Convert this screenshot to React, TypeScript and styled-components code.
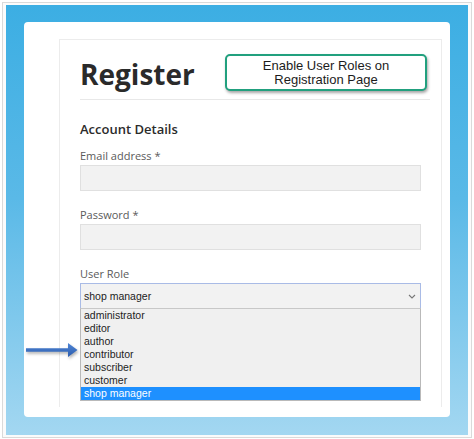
import React from 'react'
import styled, {createGlobalStyle} from 'styled-components'

const roles = ['administrator', 'editor', 'author', 'contributor', 'subscriber', 'customer', 'shop manager']

const App = () => {
  const selected = 'shop manager'
  return (
    <Page>
      <GlobalStyle />
      <Outer>
        <Blue>
          <Card>
            <FormBox>
              <Title>Register</Title>
              <Section>Account Details</Section>
              <Field>
                <Label>Email address *</Label>
                <Input />
              </Field>
              <Field>
                <Label>Password *</Label>
                <Input />
              </Field>
              <Field>
                <Label>User Role</Label>
                <Select>
                  <span>{selected}</span>
                  <svg width="8" height="5" viewBox="0 0 8 5" fill="none">
                    <path d="M1 1l3 3 3-3" stroke="#777" strokeWidth="1.1" />
                  </svg>
                </Select>
                <Options>
                  {roles.map((r) => (
                    <Option key={r} active={r === selected}>{r}</Option>
                  ))}
                </Options>
              </Field>
            </FormBox>

            <Callout>
              Enable User Roles on
              <br />
              Registration Page
            </Callout>

            <Arrow width="54" height="18" viewBox="0 0 54 18">
              <defs>
                <linearGradient id="ag" x1="0" y1="0" x2="0" y2="1">
                  <stop offset="0" stopColor="#4f86d6" />
                  <stop offset="1" stopColor="#2c5cad" />
                </linearGradient>
              </defs>
              <path d="M1 7.2h42V2l9.5 7-9.5 7v-5.2H1z" fill="url(#ag)" />
            </Arrow>
          </Card>
        </Blue>
      </Outer>
    </Page>
  )
}

export default App

const GlobalStyle = createGlobalStyle`
  body {
    margin: 0;
    background: #fff;
    font-family: "Open Sans", "Liberation Sans", sans-serif;
  }
`

const Page = styled.div`
  width: 474px;
  height: 439px;
  padding: 2px 2px 0 2px;
  box-sizing: border-box;
`

const Outer = styled.div`
  width: 470px;
  height: 436px;
  border: 1px solid #dadada;
  padding: 2px 3px;
  box-sizing: border-box;
  background: #fbfbfb;
`

const Blue = styled.div`
  width: 462px;
  height: 430px;
  padding: 17px 18px 18px 18px;
  box-sizing: border-box;
  background: linear-gradient(180deg, #3caee3 0%, #5ab9e7 45%, #a3d7f1 100%);
`

const Card = styled.div`
  position: relative;
  width: 426px;
  height: 395px;
  background: #fff;
  border-radius: 4px;
  padding: 17px 8px 10px 35px;
  box-sizing: border-box;
`

const FormBox = styled.div`
  height: 100%;
  border: 1px solid #ececec;
  border-bottom: none;
  padding: 17px 20px 0 20px;
  box-sizing: border-box;
`

const Title = styled.h1`
  margin: 0 -9px 0 0;
  padding: 0 0 8px 0;
  font-size: 28px;
  line-height: 34px;
  font-weight: 700;
  color: #2a2a2a;
  border-bottom: 1px solid #e8e8e8;
`

const Section = styled.h2`
  margin: 21px 0 12px 0;
  font-size: 13px;
  line-height: 16px;
  font-weight: 600;
  color: #2b2b2b;
`

const Field = styled.div`
  margin-bottom: 17px;
`

const Label = styled.div`
  font-size: 11px;
  line-height: 14px;
  color: #5a5a5a;
  margin-bottom: 2px;
`

const Input = styled.div`
  height: 26px;
  background: #f2f2f2;
  border: 1px solid #e0e0e0;
  box-sizing: border-box;
`

const Select = styled.div`
  height: 26px;
  background: #f2f2f2;
  border: 1px solid #a9bbe6;
  box-sizing: border-box;
  display: flex;
  align-items: center;
  justify-content: space-between;
  padding: 0 4px 0 3px;
  font-family: "Liberation Sans", Arial, sans-serif;
  font-size: 10.5px;
  color: #222;
`

const Options = styled.div`
  margin-top: -1px;
  border: 1px solid #b9b9b9;
  border-top: 1px solid #c8c8c8;
  background: #f0f0f0;
  font-family: "Liberation Sans", Arial, sans-serif;
  font-size: 10.5px;
`

const Option = styled.div<{active?: boolean}>`
  height: 13px;
  line-height: 13px;
  padding-left: 3px;
  color: ${(p) => (p.active ? '#fff' : '#1e1e1e')};
  background: ${(p) => (p.active ? '#1e90ff' : 'transparent')};
`

const Callout = styled.div`
  position: absolute;
  left: 201px;
  top: 32px;
  width: 202px;
  height: 37px;
  box-sizing: border-box;
  border: 2px solid #21a07e;
  border-radius: 5px;
  background: #fff;
  box-shadow: 1px 2px 3px rgba(0, 0, 0, 0.35);
  text-align: center;
  font-family: "Liberation Sans", Arial, sans-serif;
  font-size: 13px;
  line-height: 14px;
  color: #1c1c1c;
  padding-top: 3px;
`

const Arrow = styled.svg`
  position: absolute;
  left: 1px;
  top: 319px;
  filter: drop-shadow(1px 2px 1.5px rgba(0, 0, 0, 0.3));
`
